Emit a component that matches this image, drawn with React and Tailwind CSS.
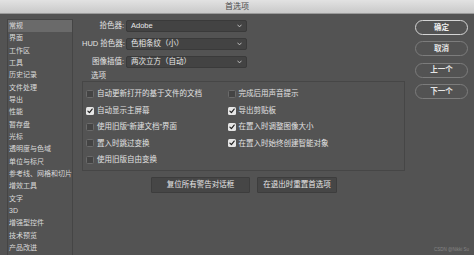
import React from 'react'

const navItems = [
  '常规', '界面', '工作区', '工具', '历史记录', '文件处理', '导出', '性能', '暂存盘', '光标',
  '透明度与色域', '单位与标尺', '参考线、网格和切片', '增效工具', '文字', '3D', '增强型控件', '技术预览', '产品改进',
]

const leftOptions = [
  { label: '自动更新打开的基于文件的文档', checked: false },
  { label: '自动显示主屏幕', checked: true },
  { label: '使用旧版“新建文档”界面', checked: false },
  { label: '置入时跳过变换', checked: false },
  { label: '使用旧版自由变换', checked: false },
]

const rightOptions = [
  { label: '完成后用声音提示', checked: false },
  { label: '导出剪贴板', checked: true },
  { label: '在置入时调整图像大小', checked: true },
  { label: '在置入时始终创建智能对象', checked: true },
]

const selects = [
  { label: '拾色器:', value: 'Adobe' },
  { label: 'HUD 拾色器:', value: '色相条纹（小）' },
  { label: '图像插值:', value: '两次立方（自动）' },
]

const Checkbox = ({ checked }) => (
  checked ? (
    <span className="w-[8px] h-[8px] rounded-[1.5px] bg-[#e6e6e6] flex items-center justify-center shrink-0">
      <svg width="6" height="6" viewBox="0 0 10 10">
        <path d="M1.5 5.2 L4 7.8 L8.6 1.8" fill="none" stroke="#222" strokeWidth="2" strokeLinecap="round" strokeLinejoin="round" />
      </svg>
    </span>
  ) : (
    <span className="w-[8px] h-[8px] rounded-[1.5px] bg-[#444] border border-[#6a6a6a] shrink-0" />
  )
)

const OptionRow = ({ label, checked }) => (
  <div className="h-[16.4px] flex items-center gap-[3px]">
    <Checkbox checked={checked} />
    <span className="text-[7.5px] leading-none text-[#e2e2e2] whitespace-nowrap">{label}</span>
  </div>
)

const Chevron = () => (
  <svg width="5" height="4" viewBox="0 0 10 8">
    <path d="M1.5 2 L5 5.8 L8.5 2" fill="none" stroke="#c8c8c8" strokeWidth="1.8" strokeLinecap="round" />
  </svg>
)

export default function App() {
  return (
    <div className="w-[474px] h-[255px] overflow-hidden bg-[#535353] flex flex-col relative font-['Liberation_Sans','Noto_Sans_CJK_SC',sans-serif]">
      {/* title bar */}
      <div className="h-[14px] shrink-0 bg-gradient-to-b from-[#e2e2e2] to-[#c9c9c9] border-b border-[#9a9a9a] flex items-center justify-center">
        <span className="text-[8px] leading-none text-[#4a4a4a]">首选项</span>
      </div>

      <div className="flex flex-1">
        {/* sidebar */}
        <div className="ml-[7px] mt-[5px] w-[66px] h-[245px] border border-[#454545] shrink-0 overflow-hidden">
          {navItems.map((item, i) => (
            <div
              key={item}
              className={`h-[12.34px] pl-[1px] text-[7px] leading-[12.34px] whitespace-nowrap text-[#dadada] ${i === 0 ? 'bg-[#6a6a6a]' : ''}`}
            >
              {item}
            </div>
          ))}
        </div>

        {/* main */}
        <div className="ml-[9px] w-[323px] mt-[6px] flex flex-col">
          <div className="flex flex-col gap-[6px]">
            {selects.map((s) => (
              <div key={s.label} className="flex items-center h-[12px]">
                <span className="w-[42px] text-right text-[7.5px] leading-none text-[#e2e2e2] whitespace-nowrap">{s.label}</span>
                <div className="ml-[2px] w-[121px] h-[12px] bg-[#434343] border border-[#3a3a3a] rounded-[2px] flex items-center justify-between pl-[4px] pr-[4px]">
                  <span className="text-[7.5px] leading-none text-[#e8e8e8] whitespace-nowrap">{s.value}</span>
                  <Chevron />
                </div>
              </div>
            ))}
          </div>

          <div className="mt-[3px] h-[10px] pl-[9px] text-[7.5px] leading-[10px] text-[#e2e2e2]">选项</div>

          <div className="h-[90px] border border-[#464646] flex pt-[4px] pl-[3px]">
            <div className="w-[141.5px] flex flex-col">
              {leftOptions.map((o) => (
                <OptionRow key={o.label} {...o} />
              ))}
            </div>
            <div className="flex flex-col">
              {rightOptions.map((o) => (
                <OptionRow key={o.label} {...o} />
              ))}
            </div>
          </div>

          <div className="mt-[6px] flex justify-center gap-[7px] pl-[1px]">
            <div className="w-[99px] h-[15.5px] bg-[#464646] border border-[#3d3d3d] rounded-[1px] flex items-center justify-center text-[7.5px] leading-none text-[#e6e6e6]">
              复位所有警告对话框
            </div>
            <div className="w-[80px] h-[15.5px] bg-[#464646] border border-[#3d3d3d] rounded-[1px] flex items-center justify-center text-[7.5px] leading-none text-[#e6e6e6]">
              在退出时重置首选项
            </div>
          </div>
        </div>

        {/* right buttons */}
        <div className="ml-[10px] mt-[5.5px] w-[53px] flex flex-col gap-[6.3px]">
          <div className="h-[15.5px] rounded-full border-[1.5px] border-[#d4d4d4] flex items-center justify-center text-[7.5px] leading-none text-[#f0f0f0] font-bold">确定</div>
          <div className="h-[15px] rounded-full border border-[#7c7c7c] flex items-center justify-center text-[7.5px] leading-none text-[#e6e6e6] font-bold">取消</div>
          <div className="h-[15px] rounded-full border border-[#7c7c7c] flex items-center justify-center text-[7.5px] leading-none text-[#e6e6e6] font-bold">上一个</div>
          <div className="h-[15px] rounded-full border border-[#7c7c7c] flex items-center justify-center text-[7.5px] leading-none text-[#e6e6e6] font-bold">下一个</div>
        </div>
      </div>

      <span className="absolute right-[5px] bottom-[3px] text-[4.5px] leading-none text-[#858585]">CSDN @Nikki Su</span>
    </div>
  )
}
